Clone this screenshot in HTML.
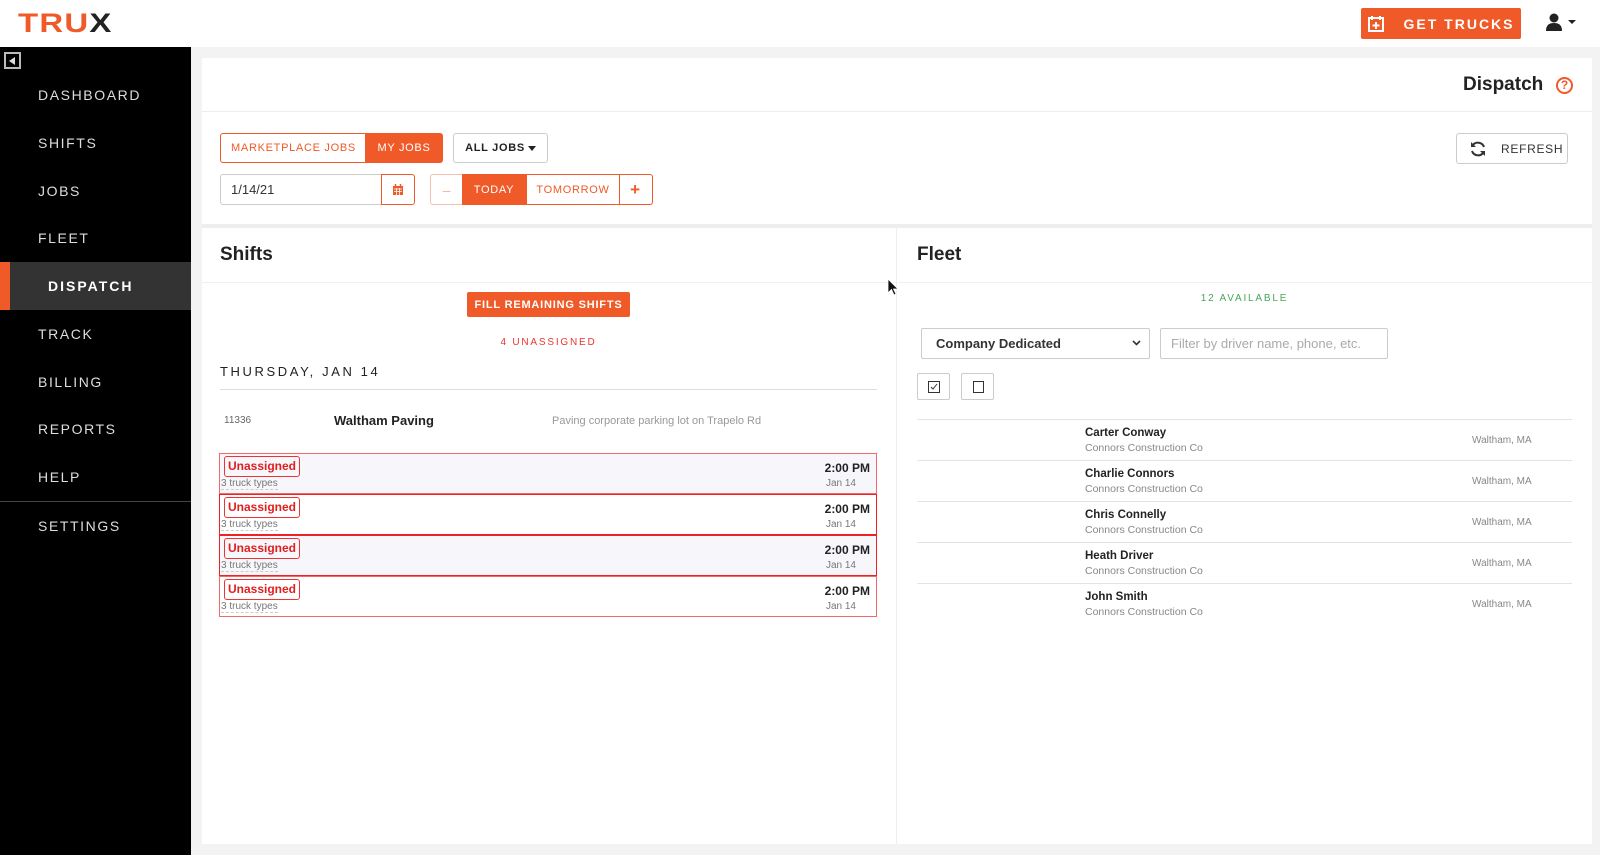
<!DOCTYPE html>
<html><head><meta charset="utf-8"><style>
*{box-sizing:border-box;margin:0;padding:0}
body{width:1600px;height:855px;overflow:hidden;background:#f3f3f3;font-family:"Liberation Sans",Arial,sans-serif;position:relative;color:#222}
.a{position:absolute}
.hdr{left:0;top:0;width:1600px;height:47px;background:#fff}
.side{left:0;top:47px;width:191px;height:808px;background:#000}
.nav{position:absolute;left:38px;color:#ddd;font-size:14px;letter-spacing:1.6px;transform:translateY(-50%)}
.card{left:202px;top:58px;width:1390px;height:786px;background:#fff}
.btn{position:absolute;display:flex;align-items:center;justify-content:center;font-size:11px;letter-spacing:.7px}
.row{position:absolute;left:219px;width:658px;height:41px;border:1px solid #f06a6a}
.badge{position:absolute;left:4px;top:2px;width:76px;height:21px;border:1px solid #e33;border-radius:3px;color:#e01f1f;font-weight:bold;font-size:12px;text-align:center;line-height:19px}
.tt{position:absolute;left:1px;top:24px;font-size:10px;color:#777;border-bottom:1px dashed #ccc;line-height:11px}
.tm{position:absolute;right:6px;top:7px;font-size:12px;font-weight:bold}
.dt{position:absolute;right:20px;top:24px;font-size:10px;color:#777}
.fl{position:absolute;left:917px;width:655px;height:41px;border-top:1px solid #e3e3e3}
.nm{position:absolute;left:168px;top:7px;font-size:11.5px;font-weight:bold}
.co{position:absolute;left:168px;top:22px;font-size:10.5px;color:#888}
.lo{position:absolute;left:555px;top:15px;font-size:10px;color:#888}
</style></head><body>
<div class="a hdr"></div>
<div class="a" style="left:18px;top:8px;font-size:27px;font-weight:bold;letter-spacing:1px;line-height:30px;transform:scaleX(1.22);transform-origin:left"><span style="color:#ef5a28">TRU</span><span style="color:#222">X</span></div>
<div class="btn" style="left:1361px;top:8px;width:160px;height:31px;background:#ef5a28;color:#fff;font-size:14px;font-weight:bold;letter-spacing:2px;border-radius:2px">
<svg width="16" height="17" viewBox="0 0 16 17" style="margin-right:20px"><rect x="1" y="3" width="14" height="13" fill="none" stroke="#fff" stroke-width="2"/><path d="M4 1v4M12 1v4M8 7v7M4.5 10.5h7" stroke="#fff" stroke-width="2"/></svg>GET TRUCKS</div>
<svg class="a" style="left:1546px;top:13px" width="34" height="20" viewBox="0 0 34 20"><circle cx="8" cy="5" r="4.5" fill="#222"/><path d="M0 18c0-6 3-8 8-8s8 2 8 8z" fill="#222"/><path d="M22 7h8l-4 4z" fill="#222"/></svg>

<div class="a side"></div>
<div class="a" style="left:4px;top:52px;width:17px;height:17px;border:2px solid #bbb"><div style="position:absolute;left:3px;top:3px;border-right:6px solid #ddd;border-top:4px solid transparent;border-bottom:4px solid transparent"></div></div>
<div class="a" style="left:0;top:262px;width:191px;height:48px;background:#333"></div>
<div class="a" style="left:0;top:262px;width:10px;height:48px;background:#ef5a28"></div>
<div class="a" style="left:0;top:501px;width:191px;height:1px;background:#444"></div>
<div class="nav" style="top:95px">DASHBOARD</div>
<div class="nav" style="top:143px">SHIFTS</div>
<div class="nav" style="top:191px">JOBS</div>
<div class="nav" style="top:238px">FLEET</div>
<div class="nav" style="top:286px;left:48px;color:#fff;font-weight:bold;letter-spacing:2px">DISPATCH</div>
<div class="nav" style="top:334px">TRACK</div>
<div class="nav" style="top:382px">BILLING</div>
<div class="nav" style="top:429px">REPORTS</div>
<div class="nav" style="top:477px">HELP</div>
<div class="nav" style="top:526px">SETTINGS</div>

<div class="a card"></div>
<div class="a" style="left:1463px;top:74px;font-size:19px;font-weight:bold">Dispatch</div>
<div class="a" style="left:1556px;top:77px;width:17px;height:17px;border:2px solid #ef5a28;border-radius:50%;color:#ef5a28;font-size:12px;font-weight:bold;text-align:center;line-height:13px">?</div>
<div class="a" style="left:202px;top:111px;width:1390px;height:1px;background:#eee"></div>

<div class="btn" style="left:220px;top:133px;width:146px;height:30px;border:1px solid #ef5a28;border-right:none;color:#ef5a28;border-radius:3px 0 0 3px">MARKETPLACE JOBS</div>
<div class="btn" style="left:365px;top:133px;width:78px;height:30px;background:#ef5a28;color:#fff;border-radius:0 3px 3px 0">MY JOBS</div>
<div class="btn" style="left:453px;top:133px;width:95px;height:30px;border:1px solid #ccc;border-radius:3px;font-weight:bold;color:#222">ALL JOBS <span style="margin-left:3px;border-top:5px solid #222;border-left:4px solid transparent;border-right:4px solid transparent"></span></div>
<div class="a" style="left:220px;top:174px;width:162px;height:31px;border:1px solid #ccc;border-right:none;border-radius:3px 0 0 3px;font-size:13px;line-height:29px;padding-left:10px;color:#333">1/14/21</div>
<div class="btn" style="left:381px;top:174px;width:34px;height:31px;border:1px solid #ef5a28;border-radius:0 3px 3px 0"><svg width="10" height="11" viewBox="0 0 10 11"><rect x="0" y="2" width="10" height="9" fill="#ef5a28"/><path d="M1 5h8M1 7.5h8M3.5 4v7M6.5 4v7" stroke="#fff" stroke-width=".8"/><path d="M2.5 0v3M7.5 0v3" stroke="#ef5a28" stroke-width="1.5"/></svg></div>
<div class="btn" style="left:430px;top:174px;width:33px;height:31px;border:1px solid #f6c0ae;border-right:none;color:#f6b09a;border-radius:3px 0 0 3px;font-size:14px">–</div>
<div class="btn" style="left:462px;top:174px;width:64px;height:31px;background:#ef5a28;color:#fff">TODAY</div>
<div class="btn" style="left:526px;top:174px;width:94px;height:31px;border:1px solid #ef5a28;color:#ef5a28">TOMORROW</div>
<div class="btn" style="left:619px;top:174px;width:34px;height:31px;border:1px solid #ef5a28;border-left:none;color:#ef5a28;border-radius:0 3px 3px 0;font-size:17px;font-weight:bold">+</div>
<div class="btn" style="left:1456px;top:133px;width:112px;height:31px;border:1px solid #ccc;border-radius:3px;color:#333;font-size:12px;justify-content:flex-start;padding-left:12px"><svg width="18" height="16" viewBox="0 0 18 16" style="margin-right:14px"><path d="M15 6A6.5 6.5 0 0 0 3.5 4.5M3 10a6.5 6.5 0 0 0 11.5 1.5" fill="none" stroke="#333" stroke-width="2"/><path d="M2 1v5h5zM16 15v-5h-5z" fill="#333"/></svg>REFRESH</div>

<div class="a" style="left:202px;top:224px;width:1390px;height:4px;background:#eee"></div>
<div class="a" style="left:896px;top:228px;width:1px;height:616px;background:#eee"></div>
<div class="a" style="left:220px;top:244px;font-size:19px;font-weight:bold">Shifts</div>
<div class="a" style="left:917px;top:244px;font-size:19px;font-weight:bold">Fleet</div>
<div class="a" style="left:202px;top:282px;width:1390px;height:1px;background:#f0f0f0"></div>
<div class="btn" style="left:467px;top:292px;width:163px;height:25px;background:#ef5a28;color:#fff;border-radius:2px;font-weight:bold;letter-spacing:.8px">FILL REMAINING SHIFTS</div>
<div class="a" style="left:220px;width:657px;top:337px;text-align:center;font-size:10px;letter-spacing:1.8px;color:#e33">4 UNASSIGNED</div>
<div class="a" style="left:220px;top:364px;font-size:13px;letter-spacing:2.6px;color:#222">THURSDAY, JAN 14</div>
<div class="a" style="left:220px;top:389px;width:657px;height:1px;background:#ddd"></div>
<div class="a" style="left:224px;top:415px;font-size:10px;color:#666">11336</div>
<div class="a" style="left:334px;top:413px;font-size:13px;font-weight:bold">Waltham Paving</div>
<div class="a" style="left:552px;top:415px;font-size:11px;color:#999">Paving corporate parking lot on Trapelo Rd</div>

<div class="row" style="top:453px;background:#f7f7fb"><div class="badge">Unassigned</div><div class="tt">3 truck types</div><div class="tm">2:00 PM</div><div class="dt">Jan 14</div></div>
<div class="row" style="top:494px;border-color:#e22"><div class="badge">Unassigned</div><div class="tt">3 truck types</div><div class="tm">2:00 PM</div><div class="dt">Jan 14</div></div>
<div class="row" style="top:535px;background:#f7f7fb;border-color:#e22"><div class="badge">Unassigned</div><div class="tt">3 truck types</div><div class="tm">2:00 PM</div><div class="dt">Jan 14</div></div>
<div class="row" style="top:576px"><div class="badge">Unassigned</div><div class="tt">3 truck types</div><div class="tm">2:00 PM</div><div class="dt">Jan 14</div></div>

<svg class="a" style="left:887px;top:278px" width="12" height="18" viewBox="0 0 12 18"><path d="M1 1v14l3.5-3.5 2.5 5.5 2-1-2.5-5H11z" fill="#111" stroke="#fff" stroke-width=".8"/></svg>

<div class="a" style="left:917px;width:655px;top:293px;text-align:center;font-size:10px;letter-spacing:1.8px;color:#4aa55a">12 AVAILABLE</div>
<div class="a" style="left:921px;top:328px;width:229px;height:31px;border:1px solid #ccc;border-radius:2px;font-size:13px;font-weight:bold;line-height:29px;padding-left:14px;color:#333">Company Dedicated<svg style="position:absolute;right:8px;top:11px" width="9" height="6" viewBox="0 0 9 6"><path d="M1 1l3.5 3.5L8 1" fill="none" stroke="#333" stroke-width="1.6"/></svg></div>
<div class="a" style="left:1160px;top:328px;width:228px;height:31px;border:1px solid #ccc;border-radius:2px;font-size:13px;line-height:29px;padding-left:10px;color:#aaa">Filter by driver name, phone, etc.</div>
<div class="a" style="left:917px;top:373px;width:33px;height:27px;border:1px solid #ccc;border-radius:2px"><svg style="position:absolute;left:10px;top:7px" width="12" height="12" viewBox="0 0 12 12"><rect x=".5" y=".5" width="11" height="11" fill="none" stroke="#333"/><path d="M3 6l2 2 4-5" fill="none" stroke="#333"/></svg></div>
<div class="a" style="left:961px;top:373px;width:33px;height:27px;border:1px solid #ccc;border-radius:2px"><div style="position:absolute;left:11px;top:7px;width:11px;height:12px;border:1.5px solid #333"></div></div>

<div class="fl" style="top:419px"><div class="nm">Carter Conway</div><div class="co">Connors Construction Co</div><div class="lo">Waltham, MA</div></div>
<div class="fl" style="top:460px"><div class="nm">Charlie Connors</div><div class="co">Connors Construction Co</div><div class="lo">Waltham, MA</div></div>
<div class="fl" style="top:501px"><div class="nm">Chris Connelly</div><div class="co">Connors Construction Co</div><div class="lo">Waltham, MA</div></div>
<div class="fl" style="top:542px"><div class="nm">Heath Driver</div><div class="co">Connors Construction Co</div><div class="lo">Waltham, MA</div></div>
<div class="fl" style="top:583px"><div class="nm">John Smith</div><div class="co">Connors Construction Co</div><div class="lo">Waltham, MA</div></div>
</body></html>
